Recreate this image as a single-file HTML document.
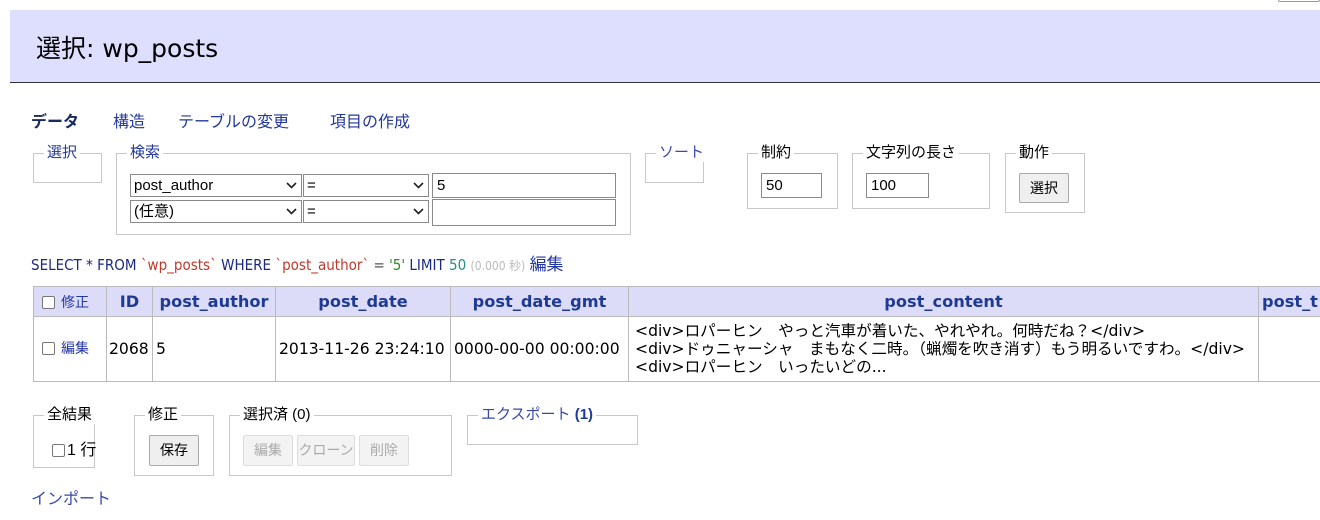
<!DOCTYPE html>
<html><head><meta charset="utf-8"><style>
*{box-sizing:border-box;margin:0;padding:0}
body{width:1320px;height:520px;overflow:hidden;background:#fff;font-family:"DejaVu Sans","Noto Sans CJK JP",sans-serif;font-size:14px;color:#000;position:relative}
.a{position:absolute;white-space:nowrap}
.fs{position:absolute;border:1px solid #c8c8c8}
.lg{position:absolute;top:-10px;left:10px;background:#fff;padding:0 3px;font-size:15px;line-height:18px;white-space:nowrap;font-family:"Liberation Sans","Noto Sans CJK JP",sans-serif}
.blue{color:#2337a0}
.sel{position:absolute;border:1px solid #8a8a8a;background:#fff;font-family:"Liberation Sans","Noto Sans CJK JP",sans-serif;font-size:15px;padding-left:3px;line-height:21px;height:23px}
.sel svg{position:absolute;right:4px;top:7px}
.inp{position:absolute;border:1px solid #8a8a8a;background:#fff;font-family:"Liberation Sans",sans-serif;font-size:15px;padding-left:4px;line-height:23px}
.btn{position:absolute;border:1px solid #aaa;background:#efefef;border-radius:2px;font-family:"Liberation Sans","Noto Sans CJK JP",sans-serif;font-size:14px;text-align:center;white-space:nowrap}
table{position:absolute;left:33px;top:286px;border-collapse:collapse;font-size:15.6px;table-layout:fixed;width:1305px}
td,th{border:1px solid #bbb;padding:0 3px;white-space:nowrap;overflow:hidden}
th{background:#dcdcf8;color:#1f3a93;height:30px;font-weight:bold;font-size:16.2px}
td{height:65px;vertical-align:middle;line-height:18px}
.cb{display:inline-block;width:13px;height:13px;border:1px solid #777;border-radius:2px;vertical-align:-2px;margin-right:6px;background:#fff}
</style></head><body>
<div class="a" style="left:1278px;top:-6px;width:42px;height:8px;border:1px solid #999;border-radius:2px"></div>
<div class="a" style="left:10px;top:10px;width:1310px;height:73px;background:#dedefe;border-bottom:1px solid #333"></div>
<div class="a" style="left:36px;top:29px;font-size:25px;font-family:'DejaVu Sans','Noto Sans CJK JP',sans-serif">選択: wp_posts</div>

<div class="a" style="left:31px;top:108px;font-size:16px;font-weight:bold;color:#1a2a60;font-family:'Liberation Sans','Noto Sans CJK JP',sans-serif">データ</div>
<div class="a blue" style="left:113px;top:108px;font-size:16px;font-family:'Liberation Sans','Noto Sans CJK JP',sans-serif">構造</div>
<div class="a blue" style="left:178px;top:108px;font-size:16px;font-family:'Liberation Sans','Noto Sans CJK JP',sans-serif">テーブルの変更</div>
<div class="a blue" style="left:330px;top:108px;font-size:16px;font-family:'Liberation Sans','Noto Sans CJK JP',sans-serif">項目の作成</div>

<div class="fs" style="left:33px;top:153px;width:69px;height:30px"><span class="lg blue">選択</span></div>
<div class="fs" style="left:116px;top:153px;width:515px;height:82px"><span class="lg blue">検索</span></div>
<div class="sel" style="left:130px;top:174px;width:172px">post_author<svg width="11" height="7"><path d="M1 1l4.5 4.5L10 1" stroke="#222" stroke-width="1.6" fill="none"/></svg></div>
<div class="sel" style="left:303px;top:174px;width:126px">=<svg width="11" height="7"><path d="M1 1l4.5 4.5L10 1" stroke="#222" stroke-width="1.6" fill="none"/></svg></div>
<div class="inp" style="left:432px;top:173px;width:184px;height:25px">5</div>
<div class="sel" style="left:130px;top:200px;width:172px">(任意)<svg width="11" height="7"><path d="M1 1l4.5 4.5L10 1" stroke="#222" stroke-width="1.6" fill="none"/></svg></div>
<div class="sel" style="left:303px;top:200px;width:126px">=<svg width="11" height="7"><path d="M1 1l4.5 4.5L10 1" stroke="#222" stroke-width="1.6" fill="none"/></svg></div>
<div class="inp" style="left:432px;top:199px;width:184px;height:27px"></div>

<div class="fs" style="left:645px;top:153px;width:59px;height:30px"><span class="lg blue" style="color:#3a4aa8">ソート</span></div>
<div class="fs" style="left:747px;top:153px;width:91px;height:56px"><span class="lg">制約</span></div>
<div class="inp" style="left:761px;top:173px;width:61px;height:25px">50</div>
<div class="fs" style="left:852px;top:153px;width:138px;height:56px"><span class="lg">文字列の長さ</span></div>
<div class="inp" style="left:866px;top:173px;width:63px;height:25px">100</div>
<div class="fs" style="left:1005px;top:153px;width:80px;height:60px"><span class="lg">動作</span></div>
<div class="btn" style="left:1019px;top:173px;width:50px;height:30px;line-height:28px">選択</div>

<div class="a" style="left:31px;top:250px;font-size:15px;font-family:'DejaVu Sans Condensed','Liberation Sans Narrow','Noto Sans CJK JP',sans-serif"><span style="color:#1a2a80">SELECT * FROM </span><span style="color:#c0392b">`wp_posts`</span><span style="color:#1a2a80"> WHERE </span><span style="color:#c0392b">`post_author`</span><span style="color:#555"> = </span><span style="color:#2a8a2a">'5'</span><span style="color:#1a2a80"> LIMIT </span><span style="color:#2a8a8a">50</span> <span style="color:#bbb;font-size:12px">(0.000 秒)</span> <span class="blue" style="font-size:17px">編集</span></div>

<table>
<colgroup><col style="width:73px"><col style="width:46px"><col style="width:123px"><col style="width:175px"><col style="width:178px"><col style="width:630px"><col style="width:80px"></colgroup>
<tr><th style="font-weight:normal;font-size:14px;text-align:left;padding-left:8px"><span class="cb"></span><span class="blue">修正</span></th><th>ID</th><th>post_author</th><th>post_date</th><th>post_date_gmt</th><th>post_content</th><th style="text-align:left">post_t</th></tr>
<tr><td style="padding-left:8px;font-size:14px"><span class="cb"></span><span class="blue">編集</span></td><td style="padding:0 2px">2068</td><td>5</td><td>2013-11-26 23:24:10</td><td>0000-00-00 00:00:00</td><td style="font-family:'DejaVu Sans','Noto Sans CJK JP',sans-serif;padding-left:6px">&lt;div&gt;ロパーヒン　やっと汽車が着いた、やれやれ。何時だね？&lt;/div&gt;<br>&lt;div&gt;ドゥニャーシャ　まもなく二時。（蝋燭を吹き消す）もう明るいですわ。&lt;/div&gt;<br>&lt;div&gt;ロパーヒン　いったいどの...</td><td></td></tr>
</table>

<div class="fs" style="left:33px;top:415px;width:62px;height:53px"><span class="lg">全結果</span></div>
<div class="a" style="left:52px;top:436px;font-size:16px;font-family:'Liberation Sans','Noto Sans CJK JP',sans-serif"><span class="cb" style="margin-right:2px"></span>1 行</div>
<div class="fs" style="left:134px;top:415px;width:80px;height:61px"><span class="lg">修正</span></div>
<div class="btn" style="left:149px;top:435px;width:50px;height:31px;line-height:29px">保存</div>
<div class="fs" style="left:229px;top:415px;width:223px;height:61px"><span class="lg">選択済 (0)</span></div>
<div class="btn" style="left:243px;top:435px;width:50px;height:31px;line-height:29px;color:#aaa;border-color:#ddd;background:#f3f3f3">編集</div>
<div class="btn" style="left:297px;top:435px;width:58px;height:31px;line-height:29px;color:#aaa;border-color:#ddd;background:#f3f3f3">クローン</div>
<div class="btn" style="left:359px;top:435px;width:50px;height:31px;line-height:29px;color:#aaa;border-color:#ddd;background:#f3f3f3">削除</div>
<div class="fs" style="left:467px;top:415px;width:171px;height:30px"><span class="lg blue" style="color:#3a4aa8">エクスポート <b style="color:#1f3a93">(1)</b></span></div>
<div class="a" style="left:31px;top:485px;font-size:16px;color:#3a4aa8;font-family:'Liberation Sans','Noto Sans CJK JP',sans-serif">インポート</div>
</body></html>
